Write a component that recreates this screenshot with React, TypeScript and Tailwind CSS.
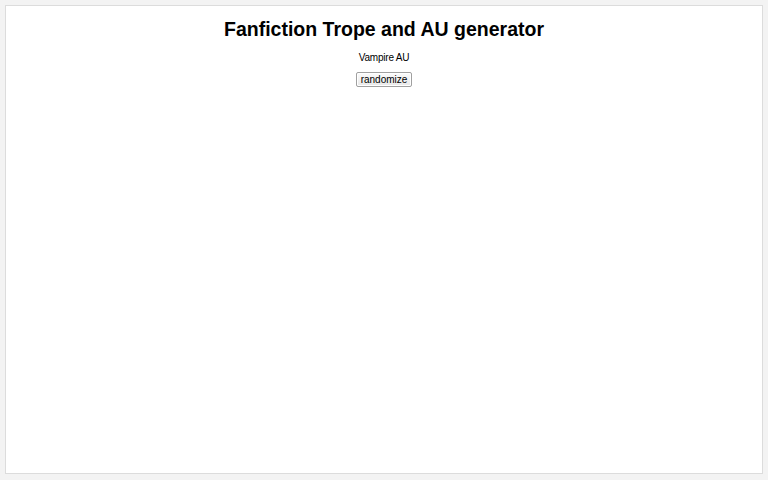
export default function App() {
  return (
    <div className="h-[480px] w-[768px] bg-[#f3f3f3] p-[5px] font-['Liberation_Sans',Arial,sans-serif] text-black">
      <div className="flex h-[469px] w-[758px] flex-col items-center border border-[#dcdcdc] bg-white">
        <h1 className="mt-[12px] text-[19.5px] font-bold leading-[22px]">
          Fanfiction Trope and AU generator
        </h1>
        <p className="mt-[12px] text-[10px] leading-[12px] tracking-[-0.2px]">Vampire AU</p>
        <button className="mt-[8px] rounded-[2px] border border-[#a0a0a0] bg-gradient-to-b from-[#fbfbfb] to-[#e8e8e8] px-[4px] text-[10px] leading-[13px] shadow-[inset_0_0_0_1px_#fff]">
          randomize
        </button>
      </div>
    </div>
  );
}
